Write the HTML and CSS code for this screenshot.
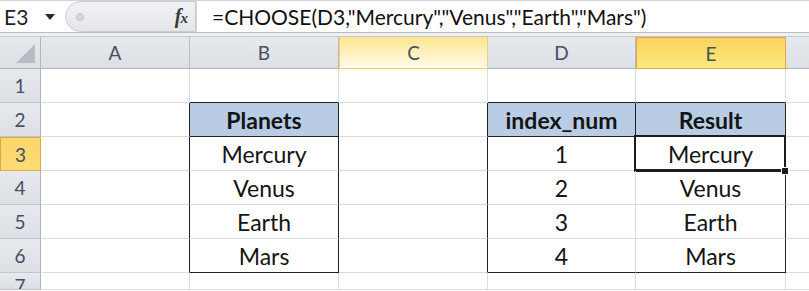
FILE: index.html
```html
<!DOCTYPE html>
<html>
<head>
<meta charset="utf-8">
<link rel="stylesheet" href="styles.css">
</head>
<body>
<div class="app">
  <div class="fbar">
    <div class="namebox"><span class="ref">E3</span><span class="dd"></span></div>
    <div class="pill"><span class="knob"></span><span class="fx"><i>f</i><span class="x">x</span></span></div>
    <div class="formula">=CHOOSE(D3,"Mercury","Venus","Earth","Mars")</div>
  </div>
  <div class="sep"></div>
  <div class="sheet">
    <div class="corner"><svg width="19" height="19" viewBox="0 0 19 19"><polygon points="19,0 19,19 0,19" fill="#b7bcc3"/></svg></div>
    <div class="ch">A</div>
    <div class="ch">B</div>
    <div class="ch hover">C</div>
    <div class="ch">D</div>
    <div class="ch sel">E</div>
    <div class="ch last"></div>

    <div class="rh">1</div>
    <div class="c"></div>
    <div class="c tb-t"></div>
    <div class="c"></div>
    <div class="c tb-t"></div>
    <div class="c tb-t"></div>
    <div class="c last"></div>

    <div class="rh">2</div>
    <div class="c bl"></div>
    <div class="c hd br bb">Planets</div>
    <div class="c bl"></div>
    <div class="c hd br bb">index_num</div>
    <div class="c hd br bb">Result</div>
    <div class="c last"></div>

    <div class="rh selr">3</div>
    <div class="c bl"></div>
    <div class="c br">Mercury</div>
    <div class="c bl"></div>
    <div class="c">1</div>
    <div class="c br active">Mercury<span class="handle"></span></div>
    <div class="c last"></div>

    <div class="rh">4</div>
    <div class="c bl"></div>
    <div class="c br">Venus</div>
    <div class="c bl"></div>
    <div class="c">2</div>
    <div class="c br">Venus</div>
    <div class="c last"></div>

    <div class="rh">5</div>
    <div class="c bl"></div>
    <div class="c br">Earth</div>
    <div class="c bl"></div>
    <div class="c">3</div>
    <div class="c br">Earth</div>
    <div class="c last"></div>

    <div class="rh">6</div>
    <div class="c bl"></div>
    <div class="c br bb">Mars</div>
    <div class="c bl"></div>
    <div class="c bb">4</div>
    <div class="c br bb">Mars</div>
    <div class="c last"></div>

    <div class="rh r7">7</div>
    <div class="c"></div>
    <div class="c"></div>
    <div class="c"></div>
    <div class="c"></div>
    <div class="c"></div>
    <div class="c last"></div>
  </div>
</div>
</body>
</html>
```
FILE: styles.css
```css
* { box-sizing: border-box; }
html, body { margin: 0; padding: 0; background: #fff; }
body { width: 809px; height: 291px; overflow: hidden; font-family: Lato, "Open Sans", sans-serif; }
.app { height: 291px; overflow: hidden; }

.fbar {
  height: 33px;
  display: flex;
  border-top: 1px solid #d0d3d8;
  border-bottom: 1px solid #b9bcc1;
  background: #fff;
}
.namebox {
  width: 65px;
  display: flex;
  align-items: center;
  padding-left: 4px;
  position: relative;
}
.ref { font-size: 21px; color: #1e1e1e; }
.dd {
  position: absolute;
  left: 45px; top: 13px;
  width: 0; height: 0;
  border-left: 5px solid transparent;
  border-right: 5px solid transparent;
  border-top: 6px solid #2b2b2b;
}
.pill {
  width: 131px;
  background: linear-gradient(#f1f2f4, #e3e5e9);
  border: 1px solid #c8ccd2;
  border-radius: 16px 0 0 16px;
  display: flex;
  align-items: center;
  justify-content: space-between;
  padding: 0 8px 0 10px;
}
.knob {
  width: 8px; height: 8px; border-radius: 50%;
  background: #d3d6db;
  border: 1px solid #c3c7cd;
}
.fx {
  font-family: "Liberation Serif", serif;
  font-size: 20px;
  font-weight: bold;
  color: #3a3a3a;
  letter-spacing: -1px;
}
.fx i { font-style: italic; }
.fx .x { font-style: italic; font-size: 15px; }
.formula {
  flex: 1;
  display: flex;
  align-items: center;
  padding-left: 15px;
  font-size: 21px;
  color: #111;
  border-left: 1px solid #d0d3d8;
  white-space: nowrap;
}
.sep {
  height: 4px;
  background: #eef0f2;
  border-bottom: 1px solid #c4c7cc;
}

.sheet {
  display: grid;
  grid-template-columns: 41px 149px 149px 149px 148px 150px 1fr;
  grid-template-rows: 32px repeat(6, 34px) 17px;
}
.corner, .ch, .rh {
  background: linear-gradient(#e6e9ed, #dcdfe4);
  color: #45505e;
  font-size: 19px;
  display: flex;
  align-items: center;
  justify-content: center;
}
.corner {
  border-right: 1px solid #b2b6bc;
  border-bottom: 1px solid #b2b6bc;
  align-items: flex-end;
  justify-content: flex-end;
  padding: 0 5px 5px 0;
}
.ch {
  border-right: 1px solid #b9bdc3;
  border-bottom: 1px solid #b2b6bc;
}
.ch.hover {
  background: linear-gradient(#fde58f, #fffbea);
  border-right-color: #f1cf6c;
  border-left: 1px solid #f1cf6c;
  border-bottom-color: #f1cf6c;
}
.ch.sel {
  background: linear-gradient(#fbd25e, #fde97e);
  border: 1px solid #d9a94a;
}
.ch.last { border-right: none; }
.rh {
  border-right: 1px solid #b2b6bc;
  border-bottom: 1px solid #c3c7cc;
  font-size: 19px;
}
.rh.r7 { align-items: flex-start; padding-top: 3px; line-height: 1; overflow: hidden; }
.rh.selr {
  background: linear-gradient(#fbd66a, #fcdc75);
  border: 1px solid #d9a94a;
}
.c {
  border-right: 1px solid #dadcdd;
  border-bottom: 1px solid #dadcdd;
  display: flex;
  align-items: center;
  justify-content: center;
  font-size: 23px;
  color: #141414;
  position: relative;
  padding-top: 2px;
  line-height: 1;
}
.c.last { border-right: none; }
.c.tb-t { border-bottom-color: #222; }
.c.bl { border-right-color: #222; }
.c.br { border-right-color: #222; }
.c.bb { border-bottom-color: #222; }
.c.hd { background: #b8cce4; font-weight: bold; }
.active::before {
  content: "";
  position: absolute;
  left: -2px; top: -2px; right: -1px; bottom: -2px;
  border: 2px solid #1c1c1c;
  border-bottom-width: 3px;
  pointer-events: none;
}
.handle {
  position: absolute;
  right: -4px; bottom: -5px;
  width: 6px; height: 6px;
  background: #1c1c1c;
  border: 1px solid #fff;
  box-sizing: content-box;
  z-index: 2;
}
```
